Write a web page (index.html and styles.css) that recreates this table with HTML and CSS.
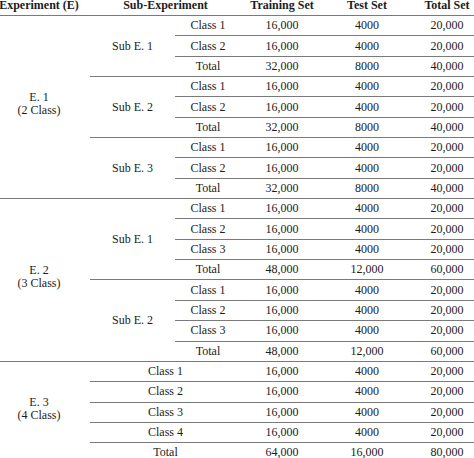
FILE: index.html
```html
<!DOCTYPE html>
<html lang="en">
<head>
<meta charset="utf-8">
<title>Experiments table</title>
<link rel="stylesheet" href="styles.css">
</head>
<body>
<div class="frame">
  <div class="table">
    <div class="th">Experiment (E)</div>
    <div class="th span2">Sub-Experiment</div>
    <div class="th">Training Set</div>
    <div class="th">Test Set</div>
    <div class="th">Total Set</div>

    <div class="td rows9 exp">E. 1<br>(2 Class)</div>
    <div class="td rows3">Sub E. 1</div>
    <div class="td">Class 1</div><div class="td">16,000</div><div class="td">4000</div><div class="td">20,000</div>
    <div class="td">Class 2</div><div class="td">16,000</div><div class="td">4000</div><div class="td">20,000</div>
    <div class="td">Total</div><div class="td">32,000</div><div class="td">8000</div><div class="td">40,000</div>

    <div class="td rows3">Sub E. 2</div>
    <div class="td">Class 1</div><div class="td">16,000</div><div class="td">4000</div><div class="td">20,000</div>
    <div class="td">Class 2</div><div class="td">16,000</div><div class="td">4000</div><div class="td">20,000</div>
    <div class="td">Total</div><div class="td">32,000</div><div class="td">8000</div><div class="td">40,000</div>

    <div class="td rows3">Sub E. 3</div>
    <div class="td">Class 1</div><div class="td">16,000</div><div class="td">4000</div><div class="td">20,000</div>
    <div class="td">Class 2</div><div class="td">16,000</div><div class="td">4000</div><div class="td">20,000</div>
    <div class="td">Total</div><div class="td">32,000</div><div class="td">8000</div><div class="td">40,000</div>

    <div class="td rows8 exp">E. 2<br>(3 Class)</div>
    <div class="td rows4">Sub E. 1</div>
    <div class="td">Class 1</div><div class="td">16,000</div><div class="td">4000</div><div class="td">20,000</div>
    <div class="td">Class 2</div><div class="td">16,000</div><div class="td">4000</div><div class="td">20,000</div>
    <div class="td">Class 3</div><div class="td">16,000</div><div class="td">4000</div><div class="td">20,000</div>
    <div class="td">Total</div><div class="td">48,000</div><div class="td">12,000</div><div class="td">60,000</div>

    <div class="td rows4">Sub E. 2</div>
    <div class="td">Class 1</div><div class="td">16,000</div><div class="td">4000</div><div class="td">20,000</div>
    <div class="td">Class 2</div><div class="td">16,000</div><div class="td">4000</div><div class="td">20,000</div>
    <div class="td">Class 3</div><div class="td">16,000</div><div class="td">4000</div><div class="td">20,000</div>
    <div class="td">Total</div><div class="td">48,000</div><div class="td">12,000</div><div class="td">60,000</div>

    <div class="td rows5 exp">E. 3<br>(4 Class)</div>
    <div class="td span2">Class 1</div><div class="td">16,000</div><div class="td">4000</div><div class="td">20,000</div>
    <div class="td span2">Class 2</div><div class="td">16,000</div><div class="td">4000</div><div class="td">20,000</div>
    <div class="td span2">Class 3</div><div class="td">16,000</div><div class="td">4000</div><div class="td">20,000</div>
    <div class="td span2">Class 4</div><div class="td">16,000</div><div class="td">4000</div><div class="td">20,000</div>
    <div class="td span2">Total</div><div class="td">64,000</div><div class="td">16,000</div><div class="td">80,000</div>
  </div>
</div>
</body>
</html>
```
FILE: styles.css
```css
html, body {
  margin: 0;
  padding: 0;
  background: #ffffff;
  overflow: hidden;
}

.frame {
  width: 474px;
  height: 458px;
  overflow: hidden;
}

.table {
  display: grid;
  grid-template-columns: 102px 85px 66px 82px 88px 72px;
  grid-auto-rows: 20.35px;
  width: 495px;
  margin-left: -12px;
  margin-top: -5.35px;
  font-family: "Liberation Serif", "Times New Roman", serif;
  font-size: 12px;
  color: #1c1c1c;
}

.th,
.td {
  display: flex;
  align-items: center;
  justify-content: center;
  text-align: center;
  box-sizing: border-box;
  white-space: nowrap;
}

.th {
  font-weight: bold;
  padding-top: 1px;
}

.td {
  border-top: 1px solid #7a7a7a;
  line-height: 13px;
}

.span2 { grid-column: span 2; }
.rows3 { grid-row: span 3; }
.rows4 { grid-row: span 4; }
.rows5 { grid-row: span 5; }
.rows8 { grid-row: span 8; }
.rows9 { grid-row: span 9; }

.exp {
  padding-bottom: 6px;
}
```
